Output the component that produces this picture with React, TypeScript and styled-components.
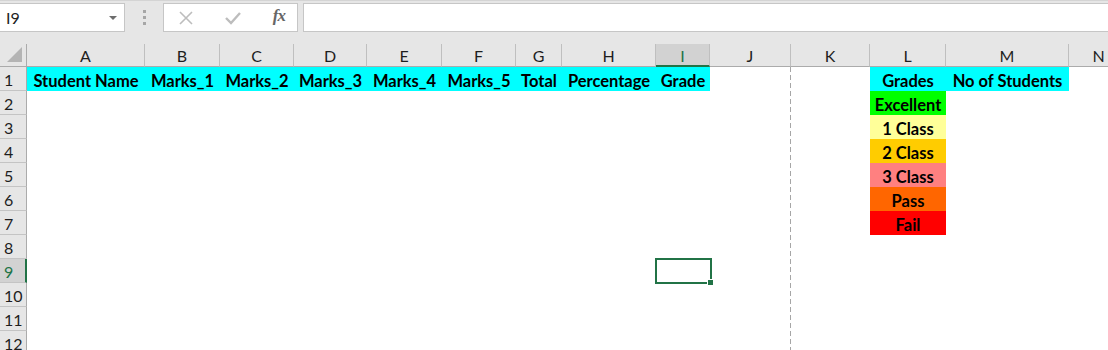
import styled, { createGlobalStyle } from 'styled-components';

const GlobalStyle = createGlobalStyle`
  html, body {
    margin: 0;
    padding: 0;
    background: #ffffff;
    overflow: hidden;
  }
`;

const columns = [
  { key: 'A', width: 118 },
  { key: 'B', width: 75 },
  { key: 'C', width: 74 },
  { key: 'D', width: 73 },
  { key: 'E', width: 75 },
  { key: 'F', width: 74 },
  { key: 'G', width: 46 },
  { key: 'H', width: 94 },
  { key: 'I', width: 54 },
  { key: 'J', width: 81 },
  { key: 'K', width: 79 },
  { key: 'L', width: 76 },
  { key: 'M', width: 123 },
  { key: 'N', width: 60 },
];

const CYAN = '#00ffff';

type CellData = { text: string; bg: string };

const headerRow: Record<string, CellData> = {
  A: { text: 'Student Name', bg: CYAN },
  B: { text: 'Marks_1', bg: CYAN },
  C: { text: 'Marks_2', bg: CYAN },
  D: { text: 'Marks_3', bg: CYAN },
  E: { text: 'Marks_4', bg: CYAN },
  F: { text: 'Marks_5', bg: CYAN },
  G: { text: 'Total', bg: CYAN },
  H: { text: 'Percentage', bg: CYAN },
  I: { text: 'Grade', bg: CYAN },
  L: { text: 'Grades', bg: CYAN },
  M: { text: 'No of Students', bg: CYAN },
};

const grades: CellData[] = [
  { text: 'Excellent', bg: '#00ff00' },
  { text: '1 Class', bg: '#ffff99' },
  { text: '2 Class', bg: '#ffcc00' },
  { text: '3 Class', bg: '#ff8080' },
  { text: 'Pass', bg: '#ff6600' },
  { text: 'Fail', bg: '#ff0000' },
];

const ROW_COUNT = 12;
const ACTIVE_COL = 'I';
const ACTIVE_ROW = 9;
const PAGE_BREAK_COL = 'J';

const getCell = (col: string, row: number): CellData | undefined => {
  if (row === 1) return headerRow[col];
  if (col === 'L' && row >= 2 && row <= 7) return grades[row - 2];
  return undefined;
};

const Window = styled.div`
  width: 1108px;
  height: 350px;
  overflow: hidden;
  background: #ffffff;
  font-family: Lato, 'Open Sans', 'Liberation Sans', sans-serif;
  color: #000000;
`;

const FormulaBar = styled.div`
  height: 44px;
  box-sizing: border-box;
  background: #e6e6e6;
  border-top: 1px solid #d4d4d4;
  padding-top: 2px;
  display: flex;
  align-items: flex-start;
`;

const NameBox = styled.div`
  width: 125px;
  height: 29px;
  box-sizing: border-box;
  background: #ffffff;
  border: 1px solid #c6c6c6;
  border-left: none;
  display: flex;
  align-items: center;
  justify-content: space-between;
  padding: 0 7px 0 6px;
  font-size: 16px;
  color: #222222;
`;

const DropArrow = styled.span`
  width: 0;
  height: 0;
  border-left: 4px solid transparent;
  border-right: 4px solid transparent;
  border-top: 4px solid #6d6d6d;
`;

const Grip = styled.div`
  width: 38px;
  height: 29px;
  display: flex;
  flex-direction: column;
  align-items: center;
  justify-content: center;
  gap: 3px;

  span {
    width: 3px;
    height: 3px;
    background: #a6a6a6;
  }
`;

const ButtonGroup = styled.div`
  width: 135px;
  height: 29px;
  box-sizing: border-box;
  background: #ffffff;
  border: 1px solid #c6c6c6;
  display: flex;
  align-items: center;
  justify-content: space-between;
  padding: 0 12px 0 14px;
`;

const FxLabel = styled.span`
  font-family: 'Liberation Serif', 'DejaVu Serif', serif;
  font-style: italic;
  font-weight: 700;
  font-size: 17px;
  color: #666666;
  letter-spacing: -1px;
  margin-top: -3px;
`;

const FormulaInput = styled.div`
  flex: 1;
  height: 29px;
  box-sizing: border-box;
  background: #ffffff;
  border: 1px solid #c6c6c6;
  border-right: none;
  margin-left: 5px;
`;

const Sheet = styled.div`
  display: grid;
  grid-template-columns: 27px ${columns.map((c) => `${c.width}px`).join(' ')};
  grid-template-rows: 23px;
  grid-auto-rows: 24px;
`;

const HeaderBase = styled.div`
  box-sizing: border-box;
  background: #e6e6e6;
  font-size: 16px;
  color: #1e1e1e;
  display: flex;
  align-items: center;
`;

const CornerCell = styled(HeaderBase)`
  border-right: 1px solid #ababab;
  border-bottom: 1px solid #ababab;
  justify-content: flex-end;
  align-items: flex-end;
  padding: 0 4px 4px 0;
`;

const ColHeader = styled(HeaderBase)<{ $active?: boolean }>`
  justify-content: center;
  padding-top: 1px;
  border-right: 1px solid #bfbfbf;
  border-bottom: ${(p) => (p.$active ? '2px solid #217346' : '1px solid #ababab')};
  background: ${(p) => (p.$active ? '#d2d2d2' : '#e6e6e6')};
  color: ${(p) => (p.$active ? '#217346' : '#1e1e1e')};
`;

const RowHeader = styled(HeaderBase)<{ $active?: boolean }>`
  padding: 1px 0 0 4px;
  border-bottom: 1px solid #c4c4c4;
  border-right: ${(p) => (p.$active ? '2px solid #217346' : '1px solid #ababab')};
  background: ${(p) => (p.$active ? '#d2d2d2' : '#e6e6e6')};
  color: ${(p) => (p.$active ? '#217346' : '#1e1e1e')};
`;

const Cell = styled.div<{ $bg?: string; $pageBreak?: boolean; $selected?: boolean }>`
  position: relative;
  box-sizing: border-box;
  display: flex;
  align-items: center;
  justify-content: center;
  padding-top: 3px;
  white-space: nowrap;
  font-size: 16.5px;
  font-weight: 700;
  color: #000000;
  background-color: ${(p) => p.$bg || '#ffffff'};
  ${(p) =>
    p.$pageBreak &&
    `
    background-image: repeating-linear-gradient(to bottom, #a6a6a6 0 5px, transparent 5px 8px);
    background-size: 1px 100%;
    background-position: right top;
    background-repeat: no-repeat;
  `}
  ${(p) =>
    p.$selected &&
    `
    z-index: 1;
    &::after {
      content: '';
      position: absolute;
      top: -1px;
      left: -1px;
      right: -2px;
      bottom: -1px;
      border: 2px solid #217346;
    }
  `}
`;

const FillHandle = styled.span`
  position: absolute;
  right: -4px;
  bottom: -3px;
  width: 5px;
  height: 5px;
  background: #217346;
  border: 1px solid #ffffff;
  z-index: 2;
`;

const CancelIcon = () => (
  <svg width="16" height="16" viewBox="0 0 16 16">
    <path d="M2 2 L14 14 M14 2 L2 14" stroke="#bdbdbd" strokeWidth="1.6" fill="none" />
  </svg>
);

const EnterIcon = () => (
  <svg width="18" height="16" viewBox="0 0 18 16">
    <path d="M2 8 L7 13 L16 3" stroke="#bdbdbd" strokeWidth="2.4" fill="none" />
  </svg>
);

const SelectAllTriangle = () => (
  <svg width="15" height="15" viewBox="0 0 15 15">
    <polygon points="15,0 15,15 0,15" fill="#b4b4b4" />
  </svg>
);

const App = () => {
  const rows = Array.from({ length: ROW_COUNT }, (_, i) => i + 1);

  return (
    <Window>
      <GlobalStyle />
      <FormulaBar>
        <NameBox>
          <span>I9</span>
          <DropArrow />
        </NameBox>
        <Grip>
          <span />
          <span />
          <span />
        </Grip>
        <ButtonGroup>
          <CancelIcon />
          <EnterIcon />
          <FxLabel>fx</FxLabel>
        </ButtonGroup>
        <FormulaInput />
      </FormulaBar>

      <Sheet>
        <CornerCell>
          <SelectAllTriangle />
        </CornerCell>
        {columns.map((c) => (
          <ColHeader key={c.key} $active={c.key === ACTIVE_COL}>
            {c.key}
          </ColHeader>
        ))}

        {rows.map((r) => [
          <RowHeader key={`h${r}`} $active={r === ACTIVE_ROW}>
            {r}
          </RowHeader>,
          ...columns.map((c) => {
            const data = getCell(c.key, r);
            const selected = c.key === ACTIVE_COL && r === ACTIVE_ROW;
            return (
              <Cell
                key={`${c.key}${r}`}
                $bg={data?.bg}
                $pageBreak={c.key === PAGE_BREAK_COL}
                $selected={selected}
              >
                {data?.text}
                {selected && <FillHandle />}
              </Cell>
            );
          }),
        ])}
      </Sheet>
    </Window>
  );
};

export default App;
